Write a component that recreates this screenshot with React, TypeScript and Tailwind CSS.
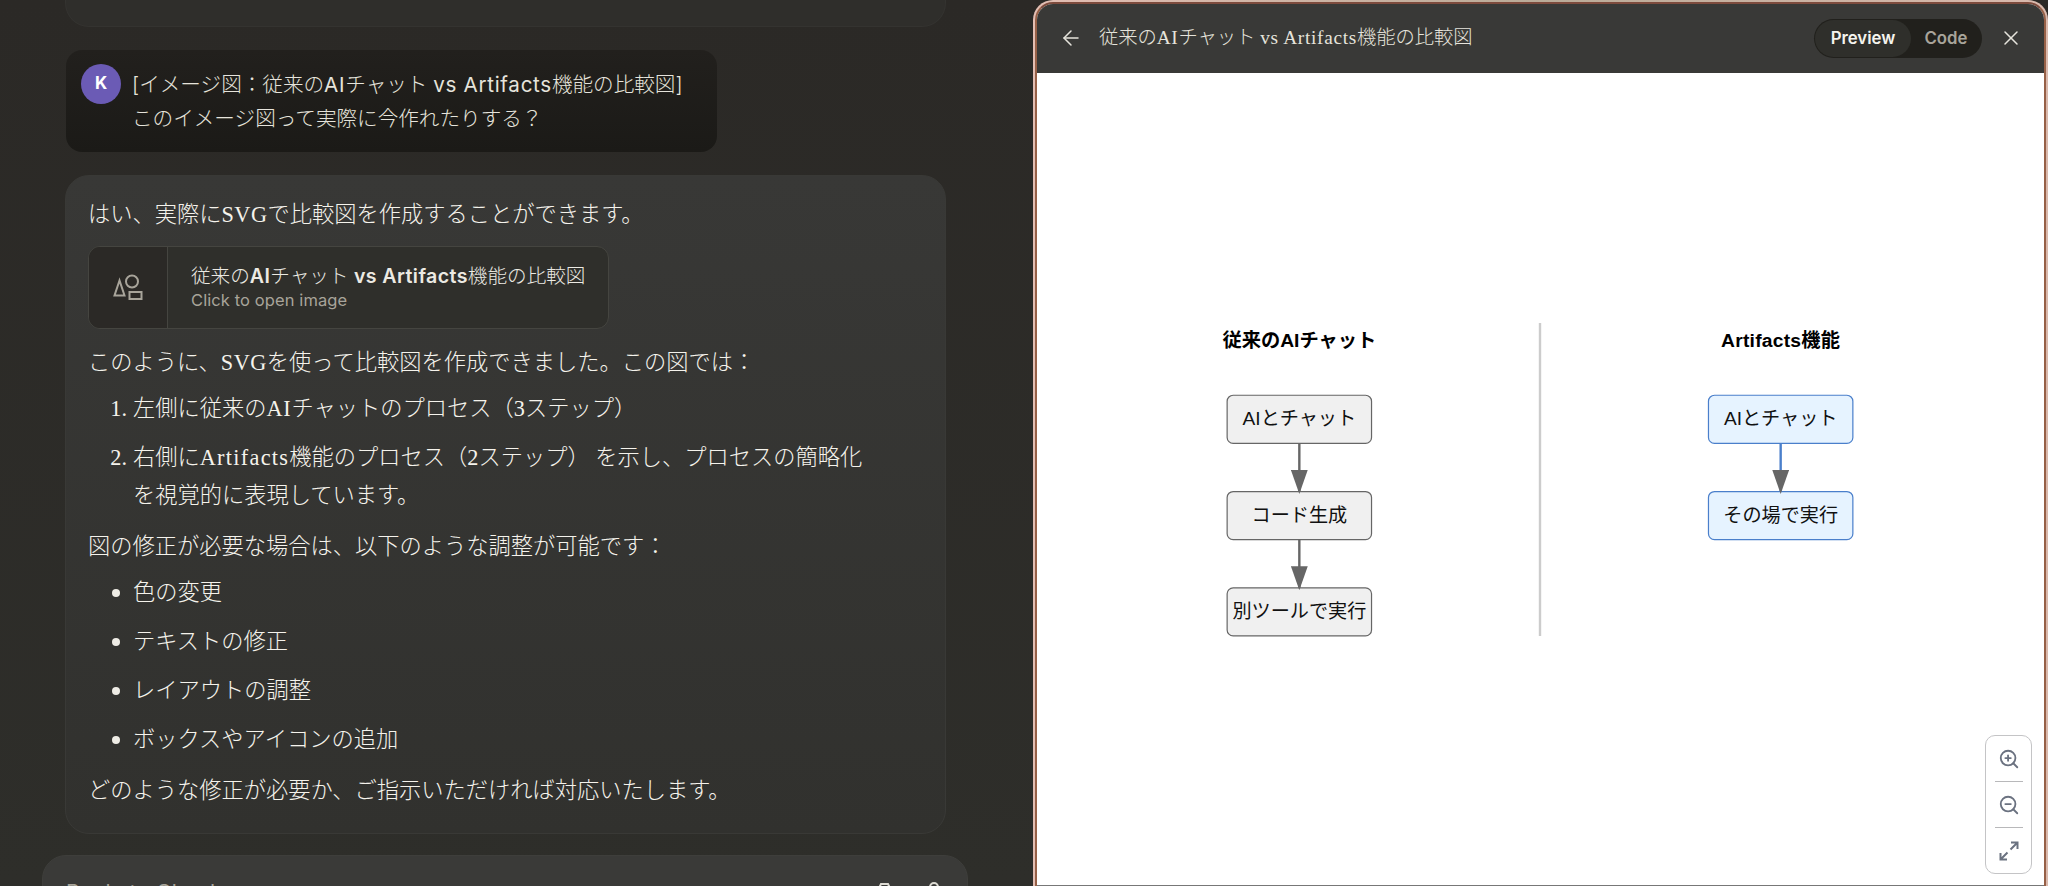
import React from "react";
import { ArrowLeft, X, ZoomIn, ZoomOut } from "lucide-react";

const sans = "font-['Inter','Noto_Sans_CJK_JP',sans-serif]";
const serif = "font-['Liberation_Serif','Noto_Sans_CJK_JP',serif]";

interface FlowBoxProps {
  x: number;
  y: number;
  label: string;
  blue?: boolean;
}

const adjustments = [
  "色の変更",
  "テキストの修正",
  "レイアウトの調整",
  "ボックスやアイコンの追加",
];

/**
 * One step of the comparison diagram
 */
function FlowBox({ x, y, label, blue }: FlowBoxProps) {
  return (
    <g>
      <rect
        x={x - 60}
        y={y}
        width="120"
        height="40"
        rx="5"
        fill={blue ? "#e6f3ff" : "#f0f0f0"}
        stroke={blue ? "#4a7fcb" : "#666"}
      />
      <text x={x} y={y + 25} textAnchor="middle" fontSize="15.9" fill="#111">
        {label}
      </text>
    </g>
  );
}

function Diagram() {
  return (
    <svg
      className="mr-px w-[722px] h-[361px] font-['Liberation_Sans','Noto_Sans_CJK_JP',sans-serif]"
      viewBox="0 0 600 300"
    >
      <defs>
        <marker id="arrow" markerWidth="10" markerHeight="7" refX="9" refY="3.5" orient="auto">
          <polygon points="0 0, 10 3.5, 0 7" fill="#666" />
        </marker>
      </defs>

      <text x="100" y="40" textAnchor="middle" fontSize="16" fontWeight="700">
        従来のAIチャット
      </text>
      <FlowBox x={100} y={80} label="AIとチャット" />
      <FlowBox x={100} y={160} label="コード生成" />
      <FlowBox x={100} y={240} label="別ツールで実行" />

      <line x1="300" y1="20" x2="300" y2="280" stroke="#ccc" strokeWidth="2" />

      <text x="500" y="40" textAnchor="middle" fontSize="16" fontWeight="700" letterSpacing="0.2">
        Artifacts機能
      </text>
      <FlowBox x={500} y={80} label="AIとチャット" blue />
      <FlowBox x={500} y={160} label="その場で実行" blue />

      <g strokeWidth="2" stroke="#666">
        <line x1="100" y1="120" x2="100" y2="160" markerEnd="url(#arrow)" />
        <line x1="100" y1="200" x2="100" y2="240" markerEnd="url(#arrow)" />
        <line x1="500" y1="120" x2="500" y2="160" stroke="#4a7fcb" markerEnd="url(#arrow)" />
      </g>
    </svg>
  );
}

function UserMessage() {
  return (
    <div className="ml-[66px] mt-[23px] flex h-[102px] w-[651px] shrink-0 rounded-2xl bg-linear-to-b from-[#22201d] to-[#1b1a17] pl-[15px] pt-[14px]">
      <div className="flex size-10 items-center justify-center rounded-full bg-[#6b5bb5] text-[17px] font-bold text-white">
        K
      </div>
      <div className="ml-[11px] mt-[4px] whitespace-nowrap text-[20.6px] font-light leading-[33.6px] text-[#e6e4dc]">
        <p>
          [イメージ図：従来の<span className="font-normal tracking-[0.7px]">AI</span>チャット{" "}
          <span className="font-normal tracking-[0.7px]">vs Artifacts</span>機能の比較図]
        </p>
        <p>このイメージ図って実際に今作れたりする？</p>
      </div>
    </div>
  );
}

function ArtifactCard() {
  return (
    <div className={`mt-[12px] flex h-[83px] w-[521px] overflow-hidden rounded-xl border border-[#454540] bg-[#2f2f2b] ${sans}`}>
      <div className="flex w-[79px] items-center justify-center border-r border-[#454540] bg-[#2b2926]">
        <svg width="30" height="28" viewBox="0 0 30 28" fill="none" stroke="#a8a49a" strokeWidth="2">
          <path d="M6.5 6.5 1.5 21.5h10z" />
          <circle cx="19" cy="7.500" r="6" />
          <path d="M16.500 18h12v7h-12z" />
        </svg>
      </div>
      <div className="whitespace-nowrap pl-[23px] pt-[15px]">
        <p className="text-[19.6px] font-light leading-[28px] text-[#eceae3]">
          従来の<b className="font-semibold tracking-[0.4px]">AI</b>チャット{" "}
          <b className="font-semibold tracking-[0.4px]">vs Artifacts</b>機能の比較図
        </p>
        <p className="text-[16.5px] font-normal leading-[20px] tracking-[0.1px] text-[#a8a49a]">
          Click to open image
        </p>
      </div>
    </div>
  );
}

function AssistantMessage() {
  return (
    <div className={`ml-[65px] mt-[23px] h-[659px] w-[881px] shrink-0 whitespace-nowrap rounded-[24px] border border-[#393936] bg-linear-to-b from-[#383836] to-[#31312e] pl-[22px] pt-[20px] text-[22.25px] font-light leading-[38px] text-[#f5f3ec] ${serif}`}>
      <p>はい、実際に<span className="tracking-[0.5px]">SVG</span>で比較図を作成することができます。</p>
      <ArtifactCard />
      <p className="mt-[15px]">
        このように、<span className="tracking-[0.5px]">SVG</span>を使って比較図を作成できました。この図では：
      </p>
      <ol className="mt-2">
        <li className="flex">
          <span className="w-[45px] pr-[6px] text-right">1.</span>
          <span>左側に従来の<span className="tracking-[0.8px]">AI</span>チャットのプロセス（3ステップ）</span>
        </li>
        <li className="mt-[11px] flex">
          <span className="w-[45px] pr-[6px] text-right">2.</span>
          <span className="leading-[37.500px]">
            右側に<span className="tracking-[1.3px]">Artifacts</span>機能のプロセス（2ステップ） を示し、プロセスの簡略化
            <br />
            を視覚的に表現しています。
          </span>
        </li>
      </ol>
      <p className="mt-[14px]">図の修正が必要な場合は、以下のような調整が可能です：</p>
      <ul className="mt-2 space-y-[11px]">
        {adjustments.map((item) => (
          <li key={item} className="flex items-center">
            <span className="ml-6 mr-[13px] size-2 rounded-full bg-[#eeece5]" />
            {item}
          </li>
        ))}
      </ul>
      <p className="mt-[13px]">どのような修正が必要か、ご指示いただければ対応いたします。</p>
    </div>
  );
}

function Composer() {
  return (
    <div className="ml-[42px] mt-[21px] flex h-[120px] w-[926px] shrink-0 justify-between rounded-t-[24px] border border-[#3e3e3b] bg-[#3a3a38] pl-[23px] pr-[22px] pt-[24px]">
      <span className="-mt-px text-[21px] leading-[28px] tracking-[0.4px] text-[#a8a49a]">Reply to Claude...</span>
      <div className="flex gap-[27px] text-[#dddbd3]">
        <svg width="24" height="24" viewBox="0 0 24 24" fill="none" stroke="currentColor" strokeWidth="2">
          <path d="M3 8h4l2-4h7l2 4h4v13H3z" />
        </svg>
        <svg width="22" height="24" viewBox="0 0 22 24" fill="none" stroke="currentColor" strokeWidth="2">
          <path d="M7 18V7a4 4 0 0 1 8 0v11" />
        </svg>
      </div>
    </div>
  );
}

function ZoomControls() {
  return (
    <div className="absolute bottom-[11px] right-[12px] flex h-[139px] w-[47px] flex-col items-center rounded-[10px] border border-[#c4c4c6] bg-white text-[#6b7280]">
      <div className="flex h-[46px] w-7 items-center justify-center border-b border-[#b8b8ba]">
        <ZoomIn size={22} strokeWidth={2} />
      </div>
      <div className="flex h-[46px] w-7 items-center justify-center border-b border-[#b8b8ba]">
        <ZoomOut size={22} strokeWidth={2} />
      </div>
      <div className="flex h-[45px] w-7 items-center justify-center">
        <svg width="20" height="20" viewBox="0 0 20 20" fill="none" stroke="currentColor" strokeWidth="2">
          <path d="M12 1.500h6.500V8M18.500 1.500 11.500 8.500M1.500 12v6.500H8M1.500 18.500l7-7" />
        </svg>
      </div>
    </div>
  );
}

function ArtifactPanel() {
  return (
    <div className="h-[886px] w-[1015px] shrink-0 rounded-t-[20px] bg-linear-to-r from-[#e3beb3] via-[#b9ab98] to-[#d9b9ad] pl-[2px] pr-[2px] pt-[2px]">
      <div className="h-full overflow-hidden rounded-t-[18px] border-x-2 border-t-2 border-x-[#966047] border-t-[#7d4b3d] bg-white">
        <header className="flex h-[69px] items-center bg-[#393937] pb-px pl-[22px] pr-[21px] text-[#e6e4dc]">
          <ArrowLeft size={24} strokeWidth={1.5} />
          <h1 className={`ml-[16px] whitespace-nowrap text-[19.3px] font-light ${serif}`}>
            従来の<span className="tracking-[0.6px]">AI</span>チャット <span className="tracking-[0.7px]">vs Artifacts</span>機能の比較図
          </h1>
          <div className="ml-auto mt-px flex h-[39px] w-[168px] rounded-full bg-[#21201c] p-px text-[16.8px] font-semibold">
            <span className="flex w-[96px] items-center justify-center rounded-full bg-[#2f2f2b] text-[#f5f4ee]">
              Preview
            </span>
            <span className="flex flex-1 items-center justify-center text-[#a8a49a]">Code</span>
          </div>
          <X className="ml-[17px]" size={24} strokeWidth={1.5} />
        </header>
        <div className="relative flex h-[813px] items-center justify-center border-b border-[#777] bg-white">
          <Diagram />
          <ZoomControls />
        </div>
      </div>
    </div>
  );
}

export default function App() {
  return (
    <div className={`flex h-[886px] w-[2048px] overflow-hidden bg-linear-to-b from-[#2b2926] to-[#2e2e2a] ${sans}`}>
      <main className="flex w-[1033px] shrink-0 flex-col overflow-hidden">
        {/* tail of the previous answer */}
        <div className="ml-[65px] h-[27px] w-[881px] shrink-0 rounded-b-[24px] border border-t-0 border-[#343330] bg-[#2f2e2b]" />
        <UserMessage />
        <AssistantMessage />
        <Composer />
      </main>
      <ArtifactPanel />
    </div>
  );
}
